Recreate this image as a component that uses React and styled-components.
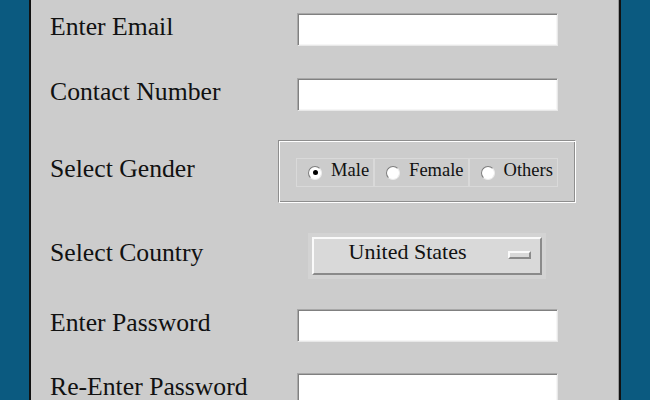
import React, { useState } from "react";
import styled, { createGlobalStyle } from "styled-components";

const GlobalStyle = createGlobalStyle`
  html, body {
    margin: 0;
    padding: 0;
    height: 400px;
    overflow: hidden;
  }
  body {
    font-family: "Liberation Serif", "Times New Roman", serif;
    color: #111;
  }
`;

const Page = styled.div`
  height: 400px;
  padding: 0 29px;
  background: #0b5a80;
  box-sizing: border-box;
`;

const Panel = styled.div`
  height: 400px;
  background: #cccccc;
  border-left: 2px solid #111;
  border-right: 2px solid #111;
  box-shadow: inset -1px 0 #9a9a9a;
  padding-top: 13px;
  box-sizing: border-box;
`;

const Row = styled.div`
  display: grid;
  grid-template-columns: 228px 298px;
  align-items: center;
  justify-items: center;
  padding-left: 19px;
  margin-top: ${(p) => p.$mt || 0}px;
`;

const Label = styled.span`
  justify-self: start;
  font-size: 25.7px;
  line-height: 20px;
  margin-bottom: 6px;
  white-space: nowrap;
`;

const Entry = styled.input`
  width: 261px;
  height: 33px;
  box-sizing: border-box;
  margin: 0;
  padding: 0 4px;
  background: #fff;
  border-style: solid;
  border-width: 1px;
  border-color: #a8a8a8 #e8e8e8 #e8e8e8 #a8a8a8;
  box-shadow: inset 1px 1px #808080, inset -1px -1px #f6f6f6;
  font-family: "Liberation Serif", serif;
  font-size: 18px;
  outline: none;
`;

const GroupFrame = styled.div`
  width: 298px;
  height: 63px;
  box-sizing: border-box;
  display: flex;
  align-items: center;
  justify-content: center;
  padding-top: 2px;
  border-style: solid;
  border-width: 1px;
  border-color: #8e8e8e #fff #fff #8e8e8e;
  box-shadow: inset 1px 1px #fff, inset -1px -1px #8e8e8e;
`;

const RadioCell = styled.label`
  display: flex;
  align-items: center;
  height: 29px;
  box-sizing: border-box;
  padding: 0 4px 0 11px;
  border: 1px solid #d9d9d9;
  cursor: pointer;
`;

const RadioDot = styled.span`
  width: 14px;
  height: 14px;
  box-sizing: border-box;
  border-radius: 50%;
  background: #fff;
  border: 1px solid;
  border-color: #7c7c7c #ececec #ececec #7c7c7c;
  margin-right: 9px;
  display: flex;
  align-items: center;
  justify-content: center;
  flex-shrink: 0;

  &::after {
    content: "";
    width: 5px;
    height: 5px;
    border-radius: 50%;
    background: ${(p) => (p.$on ? "#000" : "transparent")};
  }
`;

const RadioText = styled.span`
  font-size: 18.5px;
  line-height: 18px;
  margin-bottom: 6px;
  white-space: nowrap;
`;

const MenuWrap = styled.div`
  width: 238px;
  height: 46px;
  box-sizing: border-box;
  padding: 4px;
  background: #d3d3d3;
`;

const MenuButton = styled.button`
  width: 100%;
  height: 100%;
  box-sizing: border-box;
  margin: 0;
  padding: 0 9px 0 0;
  display: flex;
  align-items: center;
  background: #d9d9d9;
  border-style: solid;
  border-width: 2px;
  border-color: #fafafa #8a8a8a #8a8a8a #fafafa;
  font-family: "Liberation Serif", serif;
  color: #111;
  cursor: pointer;
`;

const MenuText = styled.span`
  flex: 1;
  text-align: center;
  font-size: 22px;
  line-height: 20px;
  margin-bottom: 9px;
`;

const MenuIndicator = styled.span`
  width: 23px;
  height: 8px;
  box-sizing: border-box;
  margin-left: 7px;
  margin-bottom: 2px;
  background: #d9d9d9;
  border-style: solid;
  border-width: 2px;
  border-color: #fafafa #8a8a8a #8a8a8a #fafafa;
`;

const genders = ["Male", "Female", "Others"];

export default function App() {
  const [gender, setGender] = useState("Male");

  return (
    <>
      <GlobalStyle />
      <Page>
        <Panel>
          <Row>
            <Label>Enter Email</Label>
            <Entry type="text" />
          </Row>
          <Row $mt={32}>
            <Label>Contact Number</Label>
            <Entry type="text" />
          </Row>
          <Row $mt={29}>
            <Label>Select Gender</Label>
            <GroupFrame>
              {genders.map((g) => (
                <RadioCell key={g} onClick={() => setGender(g)}>
                  <RadioDot $on={gender === g} />
                  <RadioText>{g}</RadioText>
                </RadioCell>
              ))}
            </GroupFrame>
          </Row>
          <Row $mt={30}>
            <Label>Select Country</Label>
            <MenuWrap>
              <MenuButton type="button">
                <MenuText>United States</MenuText>
                <MenuIndicator />
              </MenuButton>
            </MenuWrap>
          </Row>
          <Row $mt={30}>
            <Label>Enter Password</Label>
            <Entry type="password" />
          </Row>
          <Row $mt={31}>
            <Label>Re-Enter Password</Label>
            <Entry type="password" />
          </Row>
        </Panel>
      </Page>
    </>
  );
}
